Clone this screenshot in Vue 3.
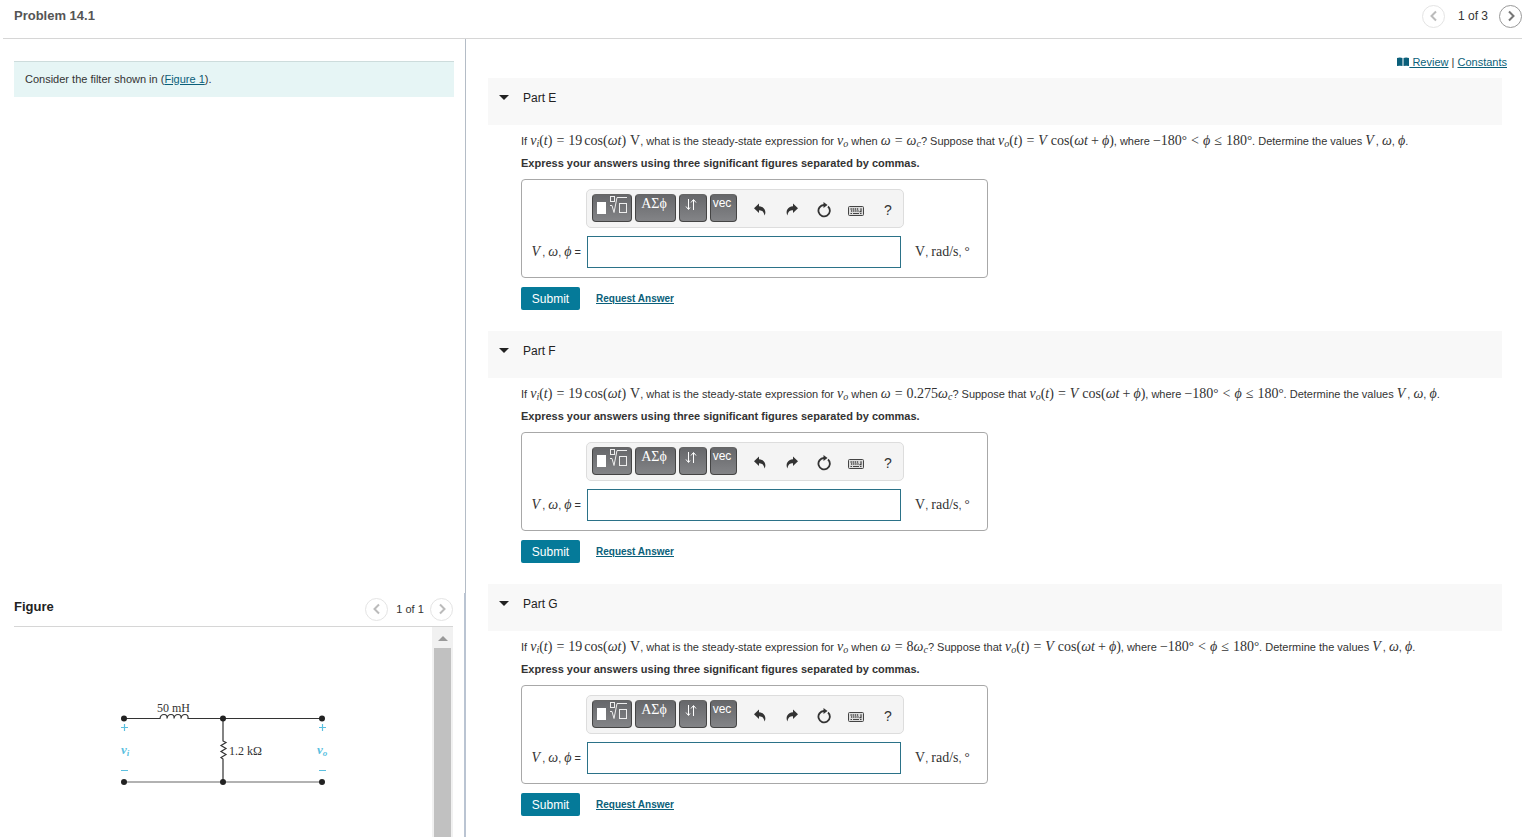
<template>
  <div class="page">
    <!-- Header -->
    <header class="header">
      <h1 class="page-title">Problem 14.1</h1>
      <nav class="pager">
        <button class="circle" disabled aria-label="Previous problem">
          <svg viewBox="0 0 10 12"><path d="M7 1.5 L2.5 6 L7 10.5" /></svg>
        </button>
        <span class="pager-text">1 of 3</span>
        <button class="circle active" aria-label="Next problem">
          <svg viewBox="0 0 10 12"><path d="M3 1.5 L7.5 6 L3 10.5" /></svg>
        </button>
      </nav>
    </header>

    <div class="columns">
      <!-- Left column -->
      <aside class="sidebar">
        <div class="intro">
          <p class="intro-box">Consider the filter shown in (<a href="#figure">Figure 1</a>).</p>
        </div>

        <section id="figure" class="figure">
          <div class="figure-header">
            <h2 class="figure-title">Figure</h2>
            <nav class="pager compact">
              <button class="circle" disabled aria-label="Previous figure">
                <svg viewBox="0 0 10 12"><path d="M7 1.5 L2.5 6 L7 10.5" /></svg>
              </button>
              <span class="pager-text">1 of 1</span>
              <button class="circle" disabled aria-label="Next figure">
                <svg viewBox="0 0 10 12"><path d="M3 1.5 L7.5 6 L3 10.5" /></svg>
              </button>
            </nav>
          </div>
          <div class="figure-body">
            <div class="figure-canvas">
              <svg class="circuit" width="240" height="100" viewBox="0 0 240 100">
                <g fill="none" stroke="#333" stroke-width="1.2">
                  <path d="M21 23.500 H57 q.5 -4 4 -4 t3 4 q.5 -4 4 -4 t3 4 q.5 -4 4 -4 t3 4 q.5 -4 4 -4 t3 4 H219" />
                  <path d="M120 23 V46 l3 1.5 l-5 3 l5 3 l-5 3 l5 3 l-5 3 l2 1.5 V87" />
                  <path d="M21 87 H219" stroke="#666" />
                </g>
                <g fill="#222">
                  <circle cx="21" cy="23.5" r="3" />
                  <circle cx="120" cy="23.5" r="3" />
                  <circle cx="219" cy="23.5" r="3" />
                  <circle cx="21" cy="87" r="3" />
                  <circle cx="120" cy="87" r="3" />
                  <circle cx="219" cy="87" r="3" />
                </g>
                <g stroke="#5bbfdf" stroke-width="1.2">
                  <path d="M18 32.5 h7 M21.5 29 v7 M18 75.5 h7" />
                  <path d="M216 32.5 h7 M219.5 29 v7 M216 75.5 h7" />
                </g>
                <text x="54" y="17" class="label">50 mH</text>
                <text x="126" y="60" class="label">1.2 kΩ</text>
                <text x="18" y="59" class="port">v<tspan class="port-sub" dy="2">i</tspan></text>
                <text x="214" y="59" class="port">v<tspan class="port-sub" dy="2">o</tspan></text>
              </svg>
            </div>
            <div class="scrollbar">
              <div class="scroll-arrow"></div>
              <div class="scroll-thumb"></div>
            </div>
          </div>
        </section>
      </aside>

      <!-- Right column -->
      <main class="content">
        <div class="links">
          <svg class="book" viewBox="0 0 12 10">
            <path d="M0 1 Q3 0 5.5 1 V9 Q3 8.3 0 9 Z M6.5 1 Q9 0 12 1 V9 Q9 8.3 6.5 9 Z" />
          </svg>
          <a href="#review">&nbsp;Review</a> | <a href="#constants">Constants</a>
        </div>

        <section v-for="part in parts" :key="part.name" class="part">
          <h2 class="part-header">
            <button class="part-toggle">
              <span class="caret"></span>
              Part {{ part.name }}
            </button>
          </h2>

          <div class="part-body">
            <p class="question">
              If <span class="math"><i>v<sub>i</sub></i>(<i>t</i>)<b>=</b>19<s></s>cos(<i>ωt</i>)<s></s><s></s>V</span>,
              what is the steady-state expression for <span class="math"><i>v<sub>o</sub></i></span> when
              <span class="math"><i>ω</i><b>=</b>{{ part.factor }}<i>ω<sub>c</sub></i></span>? Suppose that
              <span class="math"><i>v<sub>o</sub></i>(<i>t</i>)<b>=</b><i>V</i><s></s><s></s>cos(<i>ωt</i><b class="op">+</b><i>ϕ</i>)</span>, where
              <span class="math">−180<sup>°</sup><b>&lt;</b><i>ϕ</i><b>≤</b>180<sup>°</sup></span>.
              Determine the values <span class="math"><i>V</i></span><s></s>, <span class="math"><i>ω</i></span>, <span class="math"><i>ϕ</i></span>.
            </p>
            <p class="instruction">Express your answers using three significant figures separated by commas.</p>

            <div class="answer">
              <div class="toolbar">
                <button class="key templates" aria-label="Templates">
                  <svg viewBox="0 0 32 20" width="32" height="20">
                    <rect x="1" y="7" width="9" height="12" fill="#fff" />
                    <g fill="none" stroke="#eee" stroke-width="1">
                      <rect x="14.500" y="1.500" width="4" height="5" />
                      <path d="M14 10.500 h2 l2 7 l3 -15 H31" />
                      <rect x="23.500" y="8.500" width="7" height="9" />
                    </g>
                  </svg>
                </button>
                <button class="key greek">ΑΣϕ</button>
                <button class="key arrows" aria-label="Subscript and superscript">
                  <svg viewBox="0 0 12 14" width="12" height="14" fill="none" stroke="#fff" stroke-width="1">
                    <path d="M3.500 1 V11 M1 8.500 L3.500 11.500 L5 9.500 M8.500 12 V2 M6 4.500 L8.500 1.500 L11 4.500" />
                  </svg>
                </button>
                <button class="key vec">vec</button>
                <div class="tools">
                  <button class="tool" aria-label="Undo">
                    <svg viewBox="0 0 16 16"><path d="M7 1.500 L2 6.200 L7 11 V8.300 C10 8.300 12 9.500 12.500 13.500 C14.800 9.500 12.500 4.500 7 4.300 Z" /></svg>
                  </button>
                  <button class="tool" aria-label="Redo">
                    <svg viewBox="0 0 16 16"><path d="M9 1.500 L14 6.200 L9 11 V8.300 C6 8.300 4 9.500 3.500 13.500 C1.200 9.500 3.500 4.500 9 4.300 Z" /></svg>
                  </button>
                  <button class="tool" aria-label="Reset">
                    <svg viewBox="0 0 16 16">
                      <path d="M12 4.500 A5.700 5.700 0 1 1 8 3" fill="none" stroke="#333" stroke-width="1.800" />
                      <path d="M7.500 0 L11.500 3 L7.500 6 Z" />
                    </svg>
                  </button>
                  <button class="tool" aria-label="Keyboard shortcuts">
                    <svg viewBox="0 0 16 16" fill="none" stroke="#444">
                      <rect x=".5" y="4.500" width="15" height="9" rx="1" fill="#ddd" />
                      <path d="M2.500 7 H11 M3 9 H11" stroke-dasharray="1.300 .8" stroke-width="1.400" />
                      <path d="M13 6.300 V9.700 H11.500 M2.500 11.500 H4 M5 11.500 H11 M12 11.500 H13.500" stroke-width="1.200" />
                    </svg>
                  </button>
                  <button class="tool help" aria-label="Help">?</button>
                </div>
              </div>
              <label class="answer-label" :for="'answer-' + part.name">
                <span class="math"><i>V</i></span><s></s>, <span class="math"><i>ω</i></span>, <span class="math"><i>ϕ</i></span> =
              </label>
              <input :id="'answer-' + part.name" v-model="part.answer" class="answer-input" type="text">
              <span class="answer-unit"><span class="math">V</span>, <span class="math">rad/s</span>, <span class="math"><sup>°</sup></span></span>
            </div>

            <div class="actions">
              <button class="submit">Submit</button>
              <a href="#request" class="request">Request Answer</a>
            </div>
          </div>
        </section>
      </main>
    </div>
  </div>
</template>

<script setup>
import { ref } from 'vue'

const parts = ref([
  { name: 'E', factor: '', answer: '' },
  { name: 'F', factor: '0.275', answer: '' },
  { name: 'G', factor: '8', answer: '' }
])
</script>

<style>
body {
  margin: 0;
  background: #fff;
}
</style>

<style scoped>
/* Base */
.page {
  height: 100vh;
  display: flex;
  flex-direction: column;
  overflow: hidden;
  font-family: 'Liberation Sans', Arial, sans-serif;
  font-size: 11px;
  color: #333;
}

h1,
h2,
p {
  margin: 0;
}

button {
  font-family: inherit;
  padding: 0;
  border: none;
  background: transparent;
  cursor: pointer;
}

a {
  color: #0b5f7a;
}

/* Header */
.header {
  display: flex;
  justify-content: space-between;
  height: 38px;
  margin-left: 3px;
  padding-left: 11px;
  border-bottom: 1px solid #d6d6d6;
}

.page-title {
  font-size: 13px;
  line-height: 32px;
  color: #555;
}

.pager {
  display: flex;
  align-items: center;
  height: 32px;
}

.pager-text {
  box-sizing: border-box;
  width: 54px;
  padding-left: 2px;
  font-size: 12px;
  text-align: center;
}

.compact .pager-text {
  width: 42px;
  font-size: 11px;
}

.circle {
  display: flex;
  align-items: center;
  justify-content: center;
  box-sizing: border-box;
  width: 23px;
  height: 23px;
  border: 1px solid #e4e4e4;
  border-radius: 50%;
}

.circle.active {
  border-color: #999;
}

.circle svg {
  width: 10px;
  height: 12px;
  fill: none;
  stroke: #bbb;
  stroke-width: 2;
}

.circle.active svg {
  stroke: #777;
}

/* Columns */
.columns {
  display: flex;
  flex: 1;
  min-height: 0;
}

.sidebar {
  display: flex;
  flex-direction: column;
  flex: 0 0 466px;
}

.intro {
  flex: 1;
  padding: 22px 11px 0 14px;
  border-right: 1px solid #b4bcc6;
}

.intro-box {
  padding: 0 11px;
  line-height: 35px;
  background: #e6f5f5;
  border-top: 1px solid #cddcdc;
}

/* Figure */
.figure {
  padding: 0 11px 0 14px;
  border-right: 2px solid #bac4d2;
}

.figure-header {
  display: flex;
  justify-content: space-between;
  height: 33px;
  border-bottom: 1px solid #d6d6d6;
}

.figure-title {
  font-size: 13px;
  line-height: 28px;
  color: #222;
}

.figure-body {
  display: flex;
  height: 210px;
}

.figure-canvas {
  flex: 1;
  display: flex;
  justify-content: center;
  padding-top: 68px;
}

.label {
  font: 12px 'Liberation Serif', serif;
  fill: #333;
}

.port {
  font: italic bold 13px 'Liberation Serif', serif;
  fill: #5bbfdf;
}

.port-sub {
  font-size: 9px;
}

.scrollbar {
  display: flex;
  flex-direction: column;
  align-items: center;
  width: 21px;
  background: #f1f1f1;
}

.scroll-arrow {
  margin: 9px 0 7px;
  border: 5px solid transparent;
  border-top: 0;
  border-bottom-color: #999;
}

.scroll-thumb {
  flex: 1;
  width: 17px;
  background: #c1c1c1;
}

/* Content */
.content {
  flex: 1;
  min-width: 0;
  padding: 15px 20px 0 22px;
}

.links {
  margin: 0 -5px 8px 0;
  line-height: 16px;
  text-align: right;
}

.book {
  width: 12px;
  height: 10px;
  vertical-align: -1px;
  fill: #0b5f7a;
}

/* Part */
.part {
  margin-bottom: 21px;
}

.part-header {
  height: 47px;
  background: #f8f8f8;
}

.part-toggle {
  display: flex;
  align-items: center;
  width: 100%;
  height: 39px;
  padding-left: 11px;
  font-size: 12px;
  color: #222;
}

.caret {
  margin-right: 14px;
  border: 5px solid transparent;
  border-top: 5px solid #222;
  border-bottom: 0;
}

.part-body {
  padding: 5px 0 0 33px;
}

.question,
.instruction {
  line-height: 22px;
}

.instruction {
  margin-bottom: 5px;
  font-weight: bold;
}

/* Math */
.math {
  font-family: 'Liberation Serif', 'DejaVu Serif', serif;
  font-size: 14px;
  font-weight: normal;
  line-height: 1;
  white-space: nowrap;
}

.math b {
  margin: 0 4px;
  font-weight: normal;
}

.math .op {
  margin: 0 3px;
}

.math sub {
  font-size: 10px;
  line-height: 0;
  vertical-align: -2px;
}

.math sup {
  font-size: 13px;
  line-height: 0;
  vertical-align: 1px;
}

s {
  display: inline-block;
  width: 2px;
}

/* Answer */
.answer {
  display: grid;
  grid-template-columns: 59px 314px auto;
  column-gap: 6px;
  row-gap: 8px;
  align-items: center;
  width: 465px;
  padding: 9px 0;
  border: 1px solid #a8a8a8;
  border-radius: 4px;
}

.toolbar {
  grid-column: 2;
  display: flex;
  gap: 3px;
  box-sizing: border-box;
  width: 318px;
  height: 39px;
  margin-left: -1px;
  padding: 4px 5px;
  background: #f4f4f4;
  border: 1px solid #ddd;
  border-radius: 5px;
}

.key {
  display: flex;
  flex-shrink: 0;
  align-items: flex-start;
  justify-content: center;
  box-sizing: border-box;
  height: 28px;
  color: #fff;
  background: linear-gradient(#66676a, #838487);
  border: 1px solid #444;
  border-top-color: #666;
  border-radius: 4px;
}

.templates {
  width: 40px;
}

.greek {
  width: 41px;
  padding: 1px 3px 0 0;
  font-family: 'Liberation Serif', serif;
  font-size: 14px;
}

.arrows {
  width: 28px;
  padding: 3px 4px 0 0;
}

.vec {
  width: 27px;
  padding: 1px 3px 0 0;
  font-size: 12px;
}

.tools {
  display: flex;
  flex: 1;
  align-items: center;
  gap: 8px;
  min-width: 0;
  padding: 2px 0 0 8px;
}

.tool {
  display: flex;
  flex-shrink: 0;
  align-items: center;
  justify-content: center;
  width: 24px;
  height: 28px;
  fill: #333;
}

.tool svg {
  width: 16px;
  height: 16px;
}

.help {
  font-size: 14px;
  color: #333;
}

.answer-label {
  grid-column: 1;
  text-align: right;
  white-space: nowrap;
}

.answer-input {
  box-sizing: border-box;
  width: 100%;
  height: 32px;
  padding: 0 6px;
  font-size: 12px;
  border: 1px solid #2b7288;
  outline: none;
}

.answer-unit {
  padding-left: 8px;
  white-space: nowrap;
}

/* Actions */
.actions {
  display: flex;
  align-items: center;
  gap: 16px;
  margin-top: 9px;
}

.submit {
  width: 59px;
  height: 23px;
  font-size: 12px;
  color: #fff;
  background: #057a99;
  border-radius: 2px;
}

.request {
  font-size: 10px;
  font-weight: bold;
}
</style>
